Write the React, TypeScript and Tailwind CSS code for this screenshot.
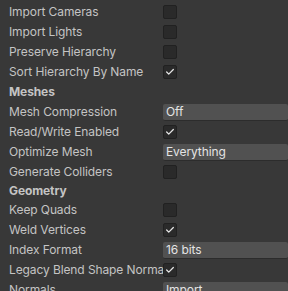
import { Check } from 'lucide-react';

type Row =
  | { kind: 'header'; label: string; h?: string }
  | { kind: 'check'; label: string; checked: boolean }
  | { kind: 'select'; label: string; value: string };

const ROWS: Row[] = [
  { kind: 'check', label: 'Import Cameras', checked: false },
  { kind: 'check', label: 'Import Lights', checked: false },
  { kind: 'check', label: 'Preserve Hierarchy', checked: false },
  { kind: 'check', label: 'Sort Hierarchy By Name', checked: true },
  { kind: 'header', label: 'Meshes' },
  { kind: 'select', label: 'Mesh Compression', value: 'Off' },
  { kind: 'check', label: 'Read/Write Enabled', checked: true },
  { kind: 'select', label: 'Optimize Mesh', value: 'Everything' },
  { kind: 'check', label: 'Generate Colliders', checked: false },
  { kind: 'header', label: 'Geometry', h: 'h-[18px]' },
  { kind: 'check', label: 'Keep Quads', checked: false },
  { kind: 'check', label: 'Weld Vertices', checked: true },
  { kind: 'select', label: 'Index Format', value: '16 bits' },
  { kind: 'check', label: 'Legacy Blend Shape Normals', checked: true },
  { kind: 'select', label: 'Normals', value: 'Import' },
];

function Checkbox({ checked }: { checked: boolean }) {
  return (
    <span className="flex h-[14px] w-[14px] items-center justify-center rounded-[2px] border border-[#212121] bg-[#2a2a2a]">
      {checked && <Check className="h-[10px] w-[10px] text-[#e6e6e6]" strokeWidth={3} />}
    </span>
  );
}

function Dropdown({ value }: { value: string }) {
  return (
    <div className="flex h-[17px] w-[140px] items-center rounded-[2px] border-b border-[#2c2c2c] bg-[#515151] pl-[3px] text-[#e4e4e4]">
      {value}
    </div>
  );
}

export default function App() {
  return (
    <div
      className="h-[291px] w-[288px] overflow-hidden bg-[#383838] pt-[2px] text-[12px] tracking-[-0.1px] text-[#c4c4c4]"
      style={{ fontFamily: 'Inter, "Noto Sans", sans-serif' }}
    >
      {ROWS.map((row) => {
        if (row.kind === 'header') {
          return (
            <div key={row.label} className={`flex items-center pl-[9px] font-bold ${row.h ?? 'h-[20px]'}`}>
              {row.label}
            </div>
          );
        }
        return (
          <div key={row.label} className="flex h-[20px] items-center">
            <div className="w-[163px] shrink-0 overflow-hidden whitespace-nowrap pl-[9px]">{row.label}</div>
            {row.kind === 'check' ? <Checkbox checked={row.checked} /> : <Dropdown value={row.value} />}
          </div>
        );
      })}
    </div>
  );
}
